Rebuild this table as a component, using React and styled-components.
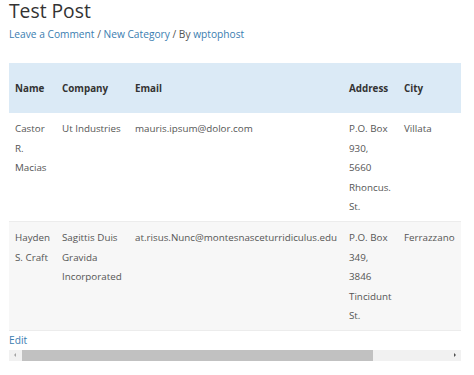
import React from 'react'
import styled, { createGlobalStyle } from 'styled-components'

const rows = [
  {
    name: 'Castor R. Macias',
    company: 'Ut Industries',
    email: 'mauris.ipsum@dolor.com',
    address: 'P.O. Box 930, 5660 Rhoncus. St.',
    city: 'Villata',
    zip: '60817',
  },
  {
    name: 'Hayden S. Craft',
    company: 'Sagittis Duis Gravida Incorporated',
    email: 'at.risus.Nunc@montesnasceturridiculus.edu',
    address: 'P.O. Box 349, 3846 Tincidunt St.',
    city: 'Ferrazzano',
    zip: '44120',
  },
]

// widths read off the screenshot, the last column sits past the scroll edge
const columns = [
  { key: 'name', label: 'Name', width: 47 },
  { key: 'company', label: 'Company', width: 73 },
  { key: 'email', label: 'Email', width: 214 },
  { key: 'address', label: 'Address', width: 55 },
  { key: 'city', label: 'City', width: 69 },
  { key: 'zip', label: 'Zip Code', width: 96 },
]

export default function App() {
  return (
    <>
      <GlobalStyle />
      <Page>
        <Title>Test Post</Title>
        <Meta>
          <MetaLink href="#">Leave a Comment</MetaLink> / <MetaLink href="#">New Category</MetaLink> / By{' '}
          <MetaLink href="#">wptophost</MetaLink>
        </Meta>
        <TableWrap>
          <Table>
            <colgroup>
              {columns.map(c => (
                <col key={c.key} style={{ width: c.width }} />
              ))}
            </colgroup>
            <thead>
              <tr>
                {columns.map(c => (
                  <Th key={c.key}>{c.label}</Th>
                ))}
              </tr>
            </thead>
            <tbody>
              {rows.map((r, i) => (
                <Tr key={r.email} $striped={i % 2 === 1}>
                  {columns.map(c => (
                    <Td key={c.key} $tight={c.key === 'address'}>
                      {r[c.key]}
                    </Td>
                  ))}
                </Tr>
              ))}
            </tbody>
          </Table>
        </TableWrap>
        <EditLink href="#">Edit</EditLink>
        <Scrollbar>
          <ArrowLeft $dim />
          <Thumb />
          <ArrowRight />
        </Scrollbar>
      </Page>
    </>
  )
}

const GlobalStyle = createGlobalStyle`
  body {
    margin: 0;
    background: #fff;
    font-family: "Open Sans", "Noto Sans", sans-serif;
    color: #555;
  }
`

const Page = styled.div`
  padding: 0 13px 0 9px;
  display: flex;
  flex-direction: column;
  align-items: flex-start;
`

const Title = styled.h1`
  margin: 0;
  font-size: 19.3px;
  line-height: 21px;
  font-weight: 400;
  color: #333;
`

const Meta = styled.div`
  margin-top: 5px;
  font-size: 10.2px;
  line-height: 16px;
  color: #555;
`

const MetaLink = styled.a`
  color: #3a7db0;
  text-decoration: none;
`

const TableWrap = styled.div`
  margin-top: 21px;
  width: 100%;
  overflow: hidden;
`

const Table = styled.table`
  table-layout: fixed;
  width: 554px;
  border-collapse: collapse;
  font-size: 9.8px;
  line-height: 19.6px;
`

const Th = styled.th`
  background: #dbeaf6;
  color: #333;
  font-weight: 700;
  text-align: left;
  padding: 15.5px 4px 15.5px 6px;
  line-height: 19px;
`

const Tr = styled.tr`
  background: ${p => (p.$striped ? '#f7f7f7' : '#fff')};
  border-bottom: 1px solid #ececec;
`

const Td = styled.td`
  vertical-align: top;
  padding: 6px ${p => (p.$tight ? '6px' : '4px')} 4px 6px;
  color: #555;
`

const EditLink = styled.a`
  margin-top: 1px;
  font-size: 10.2px;
  line-height: 16px;
  color: #3a7db0;
  text-decoration: none;
`

const Scrollbar = styled.div`
  margin-top: 2px;
  width: 100%;
  height: 11px;
  background: #f1f1f1;
  display: flex;
  align-items: center;
`

const Thumb = styled.div`
  margin-left: 6px;
  width: 351px;
  height: 11px;
  background: #c1c1c1;
`

const ArrowLeft = styled.span`
  margin-left: 5px;
  width: 0;
  height: 0;
  border-top: 2.5px solid transparent;
  border-bottom: 2.5px solid transparent;
  border-right: 2.5px solid ${p => (p.$dim ? '#a3a3a3' : '#505050')};
`

const ArrowRight = styled.span`
  margin-left: auto;
  margin-right: 5px;
  width: 0;
  height: 0;
  border-top: 2.5px solid transparent;
  border-bottom: 2.5px solid transparent;
  border-left: 2.5px solid #505050;
`
